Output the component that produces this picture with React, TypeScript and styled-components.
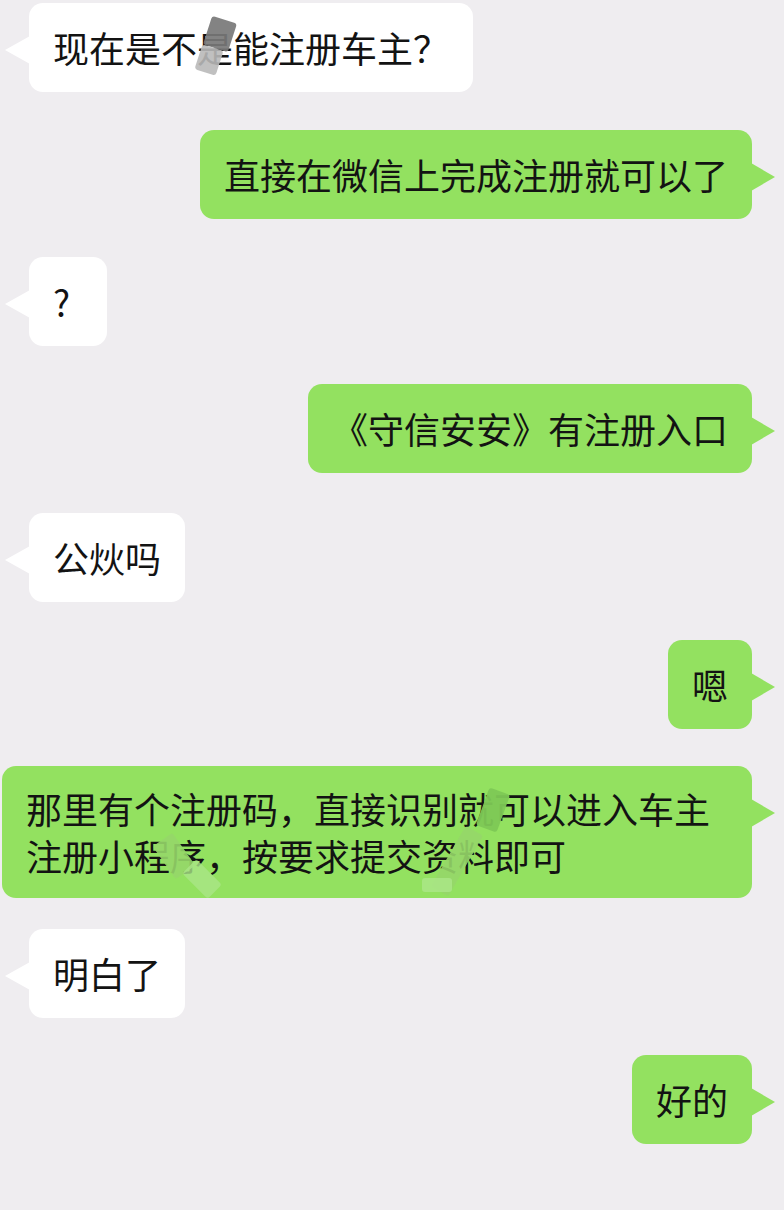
import React from "react";
import styled, { createGlobalStyle, css } from "styled-components";

const GREEN = "#93e160";
const WHITE = "#ffffff";

const Global = createGlobalStyle`
  html, body {
    margin: 0;
    padding: 0;
    background: #efedf0;
  }
  body {
    font-family: "Noto Sans CJK SC", "Noto Sans", sans-serif;
  }
`;

type Side = "in" | "out";

const Thread = styled.div`
  width: 784px;
  min-height: 1210px;
  box-sizing: border-box;
  padding-top: 3px;
  display: flex;
  flex-direction: column;
  background: #efedf0;
  overflow: hidden;
`;

const Row = styled.div<{ $side: Side; $gap: number }>`
  display: flex;
  margin-top: ${(p) => p.$gap}px;
  justify-content: ${(p) => (p.$side === "out" ? "flex-end" : "flex-start")};
  padding: ${(p) => (p.$side === "out" ? "0 32px 0 2px" : "0 2px 0 29px")};
`;

const Bubble = styled.div<{ $side: Side; $multi?: boolean }>`
  position: relative;
  box-sizing: border-box;
  min-width: 78px;
  padding: ${(p) => (p.$multi ? "19px 24px" : "21px 24px")};
  border-radius: 14px;
  font-size: 36px;
  line-height: 47px;
  color: #131313;
  background: ${(p) => (p.$side === "out" ? GREEN : WHITE)};
  word-break: break-all;

  &::before {
    content: "";
    position: absolute;
    top: 33px;
    width: 0;
    height: 0;
    border-top: 14px solid transparent;
    border-bottom: 14px solid transparent;
    ${(p) =>
      p.$side === "out"
        ? css`
            right: -23px;
            border-left: 24px solid ${GREEN};
          `
        : css`
            left: -24px;
            border-right: 25px solid ${WHITE};
          `}
  }
`;

type SmudgeSpec = {
  x: number;
  y: number;
  w: number;
  h: number;
  rot: number;
  bg: string;
};

const Smudge = styled.i<{ $s: SmudgeSpec }>`
  position: absolute;
  pointer-events: none;
  left: ${(p) => p.$s.x}px;
  top: ${(p) => p.$s.y}px;
  width: ${(p) => p.$s.w}px;
  height: ${(p) => p.$s.h}px;
  background: ${(p) => p.$s.bg};
  transform: rotate(${(p) => p.$s.rot}deg);
  border-radius: 3px;
`;

type Msg = {
  side: Side;
  gap: number;
  multi?: boolean;
  text: string;
  smudges?: SmudgeSpec[];
};

const messages: Msg[] = [
  {
    side: "in",
    gap: 0,
    text: "现在是不是能注册车主？",
    smudges: [
      { x: 178, y: 16, w: 26, h: 30, rot: 18, bg: "rgba(120,120,120,0.92)" },
      { x: 169, y: 44, w: 22, h: 26, rot: 18, bg: "rgba(185,185,185,0.9)" },
    ],
  },
  { side: "out", gap: 38, text: "直接在微信上完成注册就可以了" },
  { side: "in", gap: 38, text: "?" },
  { side: "out", gap: 38, text: "《守信安安》有注册入口" },
  { side: "in", gap: 40, text: "公炏吗" },
  { side: "out", gap: 38, text: "嗯" },
  {
    side: "out",
    gap: 37,
    multi: true,
    text: "那里有个注册码，直接识别就可以进入车主注册小程序，按要求提交资料即可",
    smudges: [
      { x: 480, y: 24, w: 22, h: 40, rot: 20, bg: "rgba(125,200,85,0.95)" },
      { x: 445, y: 60, w: 20, h: 70, rot: 30, bg: "rgba(150,215,105,0.9)" },
      { x: 420, y: 112, w: 30, h: 14, rot: 0, bg: "rgba(170,230,135,0.85)" },
      { x: 160, y: 70, w: 24, h: 40, rot: -35, bg: "rgba(150,215,105,0.9)" },
      { x: 190, y: 95, w: 20, h: 36, rot: -45, bg: "rgba(170,230,135,0.8)" },
    ],
  },
  { side: "in", gap: 31, text: "明白了" },
  { side: "out", gap: 37, text: "好的" },
];

export default function App() {
  return (
    <>
      <Global />
      <Thread>
        {messages.map((m, i) => (
          <Row key={i} $side={m.side} $gap={m.gap}>
            <Bubble $side={m.side} $multi={m.multi}>
              {m.text}
              {m.smudges?.map((s, j) => (
                <Smudge key={j} $s={s} />
              ))}
            </Bubble>
          </Row>
        ))}
      </Thread>
    </>
  );
}
